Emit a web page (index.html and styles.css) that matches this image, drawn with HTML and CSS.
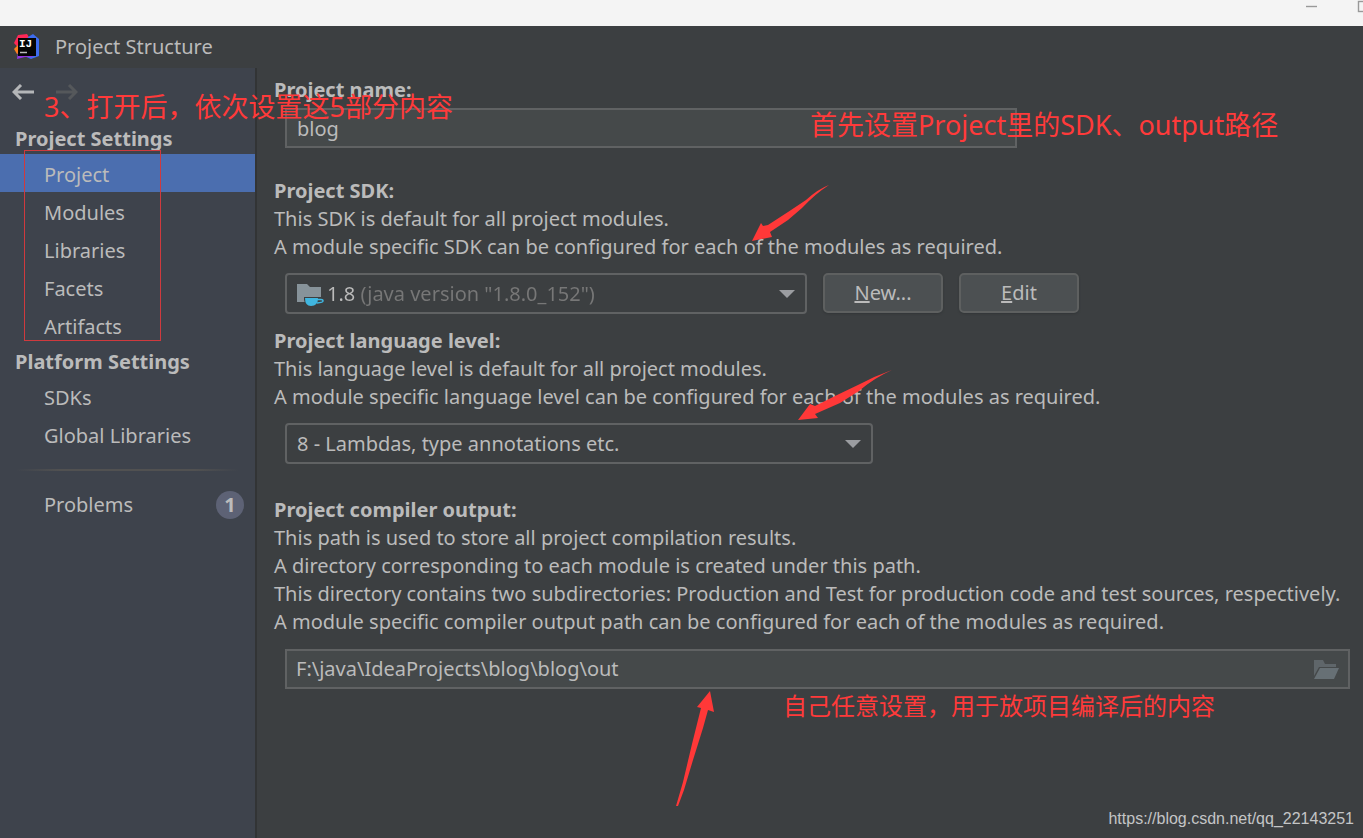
FILE: index.html
```html
<!DOCTYPE html>
<html lang="zh-CN">
<head>
  <meta charset="UTF-8">
  <meta name="viewport" content="width=device-width, initial-scale=1.0">
  <title>Project Structure</title>
  <link rel="stylesheet" href="styles.css">
</head>
<body>

  <!-- window strip -->
  <div class="window-strip">
    <svg class="window-icons" width="60" height="26" viewBox="0 0 60 26">
      <path d="M3 6.5h11" stroke="#999" stroke-width="1.4"/>
      <rect x="55.5" y="1.5" width="10" height="10" fill="none" stroke="#999" stroke-width="1.4"/>
    </svg>
  </div>

  <header class="title-bar">
    <svg width="26" height="26" viewBox="0 0 26 26">
      <path d="M4 1L13 0L16 5L8 18L0 9Z" fill="#fe2857"/>
      <path d="M0 15L5 10L8 19L3 20Z" fill="#fc801d"/>
      <path d="M14 3L19 0L25 5V22L17 25L8 21Z" fill="#3d6cf0"/>
      <path d="M4 18L16 19L19 23L11 23L3 25Z" fill="#9135e0"/>
      <rect x="4" y="4" width="18" height="18" fill="#050505"/>
      <text class="logo-text" x="5" y="13">IJ</text>
      <path d="M6 18.5h7" stroke="#bbb" stroke-width="1.5"/>
    </svg>
    <h1>Project Structure</h1>
  </header>

  <div class="content">
    <nav class="sidebar">
      <div class="history">
        <button class="history-btn" aria-label="Back">
          <svg width="22" height="16" viewBox="0 0 22 16"><path d="M22 8H2M9 1L2 8l7 7" fill="none" stroke="#b4b6b8" stroke-width="3"/></svg>
        </button>
        <button class="history-btn" aria-label="Forward" disabled>
          <svg width="22" height="16" viewBox="0 0 22 16"><path d="M0 8h20M13 1l7 7-7 7" fill="none" stroke="#55585b" stroke-width="3"/></svg>
        </button>
      </div>

      <h2>Project Settings</h2>
      <ul>
        <li><a class="active" href="#">Project</a></li>
        <li><a href="#">Modules</a></li>
        <li><a href="#">Libraries</a></li>
        <li><a href="#">Facets</a></li>
        <li><a href="#">Artifacts</a></li>
      </ul>

      <h2>Platform Settings</h2>
      <ul>
        <li><a href="#">SDKs</a></li>
        <li><a href="#">Global Libraries</a></li>
      </ul>

      <div class="separator"></div>
      <ul>
        <li><a href="#">Problems <span class="count">1</span></a></li>
      </ul>
    </nav>

    <main class="settings">
      <section class="group group-name">
        <label for="name">Project name:</label>
        <input class="field name-field" type="text" id="name" value="blog">
      </section>

      <section class="group group-sdk">
        <label for="sdk">Project SDK:</label>
        <p>This SDK is default for all project modules.</p>
        <p>A module specific SDK can be configured for each of the modules as required.</p>
        <div class="row">
          <div class="combo sdk-combo">
            <svg class="folder" width="27" height="24" viewBox="0 0 27 24">
              <path d="M0 1h10l3 3h11v15H0z" fill="#87939a"/>
              <path d="M7 14h18q2 0 2 3t-5 3q-2 4-5 4h-3q-6-1-7-7z" fill="#3c3f41"/>
              <path d="M8 15h13q0 8-7 8-6 0-6-8z" fill="#40b6e0"/>
              <path d="M20 16.5h4q2 0 2 1.5t-6 2" fill="none" stroke="#40b6e0" stroke-width="1.5"/>
            </svg>
            <select id="sdk">
              <option>1.8 (java version "1.8.0_152")</option>
            </select>
          </div>
          <button class="btn"><u>N</u>ew...</button>
          <button class="btn"><u>E</u>dit</button>
        </div>
      </section>

      <section class="group">
        <label for="level">Project language level:</label>
        <p>This language level is default for all project modules.</p>
        <p>A module specific language level can be configured for each of the modules as required.</p>
        <div class="row">
          <div class="combo level-combo">
            <select id="level">
              <option>8 - Lambdas, type annotations etc.</option>
            </select>
          </div>
        </div>
      </section>

      <section class="group">
        <label for="output">Project compiler output:</label>
        <p>This path is used to store all project compilation results.</p>
        <p>A directory corresponding to each module is created under this path.</p>
        <p>This directory contains two subdirectories: Production and Test for production code and test sources, respectively.</p>
        <p>A module specific compiler output path can be configured for each of the modules as required.</p>
        <div class="row field output-field">
          <input type="text" id="output" value="F:\java\IdeaProjects\blog\blog\out">
          <button class="browse" aria-label="Browse">
            <svg width="25" height="19" viewBox="0 0 25 19">
              <path d="M0 0h9l2 4h11v3H5L0 16z" fill="#5f666a"/>
              <path d="M6 8h19l-5 11H0z" fill="#677075"/>
            </svg>
          </button>
        </div>
      </section>
    </main>
  </div>

  <!-- notes drawn over the dialog -->
  <div class="mark-box"></div>
  <p class="note note-steps">3、打开后，依次设置这5部分内容</p>
  <p class="note note-sdk">首先设置Project里的SDK、output路径</p>
  <p class="note note-output">自己任意设置，用于放项目编译后的内容</p>
  <svg class="arrows" width="1363" height="838" viewBox="0 0 1363 838">
    <path d="M829 185Q818 189 806 200L788 212L768 225L763 226L761 223L752 241L772 237L770 232L788 220L802 208Q815 194 829 185Z"/>
    <path d="M892 370Q875 376 860 384L835 396L815 406L810 404L798 420L818 418L815 414L840 403L859 391Q874 378 892 370Z"/>
    <path d="M710 691L697 707L701 708L692 744L683 782L676 806L678 806L684 790L693 760L703 728L708 710L714 712Z"/>
  </svg>
  <div class="watermark">https://blog.csdn.net/qq_22143251</div>

</body>
</html>
```

FILE: styles.css
```css
* {
  box-sizing: border-box;
}
body {
  margin: 0;
  min-height: 100vh;
  display: flex;
  flex-direction: column;
  position: relative;
  overflow: hidden;
  background: #3c3f41;
  color: #bbbbbb;
  font-family: "Noto Sans", "Noto Sans CJK SC", sans-serif;
  font-size: 20px;
  line-height: 28px;
}
h1, h2, p, ul {
  margin: 0;
  padding: 0;
}
button, input, select {
  font: inherit;
  color: inherit;
}
svg {
  display: block;
}

/* top */
.window-strip {
  height: 26px;
  background: #f4f4f4;
  display: flex;
  justify-content: flex-end;
}
.title-bar {
  height: 42px;
  display: flex;
  align-items: center;
  gap: 15px;
  padding: 0 14px;
}
.title-bar h1 {
  font-size: 20px;
  font-weight: normal;
}
.logo-text {
  fill: #fff;
  font-family: "Liberation Mono", monospace;
  font-size: 11px;
  font-weight: bold;
}
.content {
  flex: 1;
  display: flex;
}

/* sidebar */
.sidebar {
  width: 257px;
  flex-shrink: 0;
  background: #3e434c;
  border-right: 2px solid #323435;
}
.history {
  display: flex;
  gap: 22px;
  height: 56px;
  padding: 16px 12px;
}
.history-btn {
  height: 16px;
  padding: 0;
  border: 0;
  background: none;
}
.sidebar h2 {
  font-size: 20px;
  line-height: 30px;
  padding-left: 15px;
}
.sidebar ul {
  list-style: none;
  padding-bottom: 3px;
}
.sidebar a {
  display: flex;
  align-items: center;
  justify-content: space-between;
  height: 38px;
  padding: 3px 11px 0 44px;
  color: inherit;
  text-decoration: none;
}
.sidebar .active {
  background: #4b6eaf;
}
.separator {
  height: 2px;
  margin: 13px 16px;
  background: linear-gradient(to right, transparent, #515151 20%, #515151 80%, transparent);
}
.count {
  width: 28px;
  height: 28px;
  border-radius: 50%;
  background: #5d6275;
  font-weight: bold;
  text-align: center;
}

/* form */
.settings {
  flex: 1;
  min-width: 0;
  padding: 8px 13px 0 17px;
}
.group {
  margin-bottom: 32px;
  white-space: nowrap;
}
.group-name {
  margin-bottom: 29px;
}
.group-sdk {
  margin-bottom: 13px;
}
.group label {
  display: block;
  font-weight: bold;
}
.field {
  height: 40px;
  border: 2px solid #606263;
  background: #45494a;
}
.name-field {
  width: 732px;
  margin: 4px 0 0 11px;
  padding: 0 10px;
}
.row {
  display: flex;
  gap: 16px;
  margin: 12px 0 0 11px;
}
.combo {
  display: flex;
  align-items: center;
  position: relative;
  height: 41px;
  border: 2px solid #606263;
  border-radius: 4px;
}
.combo::after {
  content: "";
  position: absolute;
  right: 10px;
  border: 8px solid transparent;
  border-top-color: #9b9da1;
  border-bottom: 0;
}
.combo select {
  flex: 1;
  height: 100%;
  padding: 0 10px;
  border: 0;
  background: none;
  appearance: none;
}
.sdk-combo {
  width: 522px;
}
.folder {
  margin: 2px 0 0 10px;
}
/* version number is bright, the rest of the line is dimmed */
.sdk-combo select {
  padding-left: 3px;
  color: transparent;
  background: linear-gradient(to right, #bbbbbb 33px, #777777 33px);
  background-clip: text;
  -webkit-background-clip: text;
}
.level-combo {
  width: 588px;
}
.btn {
  width: 120px;
  height: 40px;
  padding: 0;
  border: 2px solid #5e6060;
  border-radius: 5px;
  background: #4c5052;
  box-shadow: 0 1px 2px #333638;
}
.output-field {
  align-items: center;
  margin-top: 13px;
  padding: 0 9px;
}
.output-field input {
  flex: 1;
  padding: 0;
  border: 0;
  background: none;
}
.browse {
  padding: 0;
  border: 0;
  background: none;
}

/* notes */
.mark-box {
  position: absolute;
  left: 24px;
  top: 150px;
  width: 137px;
  height: 191px;
  border: 1px solid #cf3a3e;
}
.note {
  position: absolute;
  color: #ff3a3a;
  font-size: 27px;
  line-height: 32px;
  white-space: nowrap;
}
.note-steps {
  left: 44px;
  top: 91px;
}
.note-sdk {
  left: 810px;
  top: 109px;
}
.note-output {
  left: 783px;
  top: 690px;
  font-size: 24px;
}
.arrows {
  position: absolute;
  left: 0;
  top: 0;
  fill: #ff3838;
  pointer-events: none;
}
.watermark {
  position: absolute;
  right: 9px;
  bottom: 9px;
  color: #c4c5c6;
  font-family: "Liberation Sans", Arial, sans-serif;
  font-size: 16px;
  line-height: 20px;
}
```
